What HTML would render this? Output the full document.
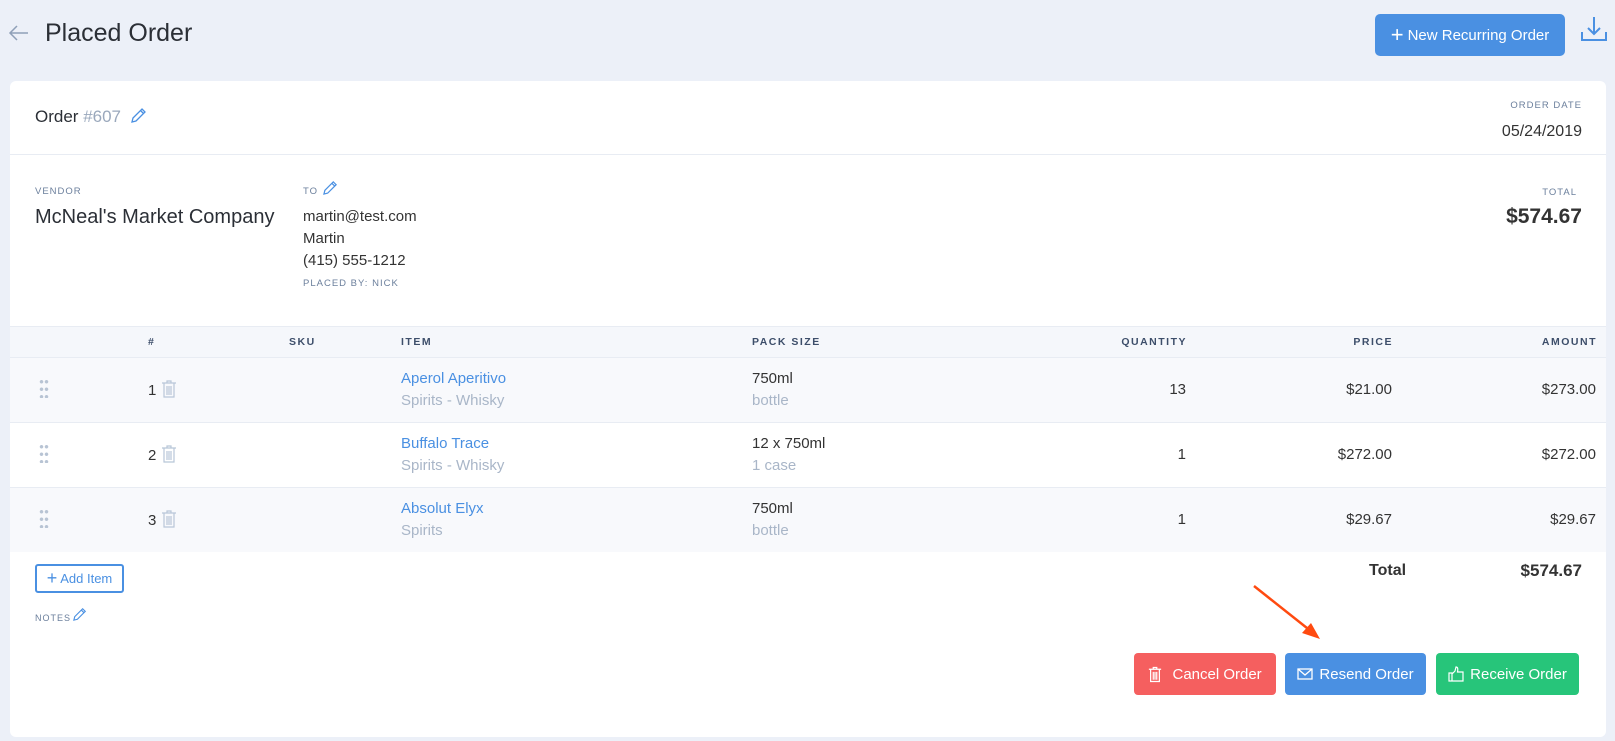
<!DOCTYPE html>
<html><head><meta charset="utf-8"><style>
*{margin:0;padding:0;box-sizing:border-box}
body{width:1615px;height:741px;background:#ecf0f8;font-family:"Liberation Sans",sans-serif;color:#333;position:relative;overflow:hidden}
.a{position:absolute;white-space:nowrap}
.lbl{font-size:10px;letter-spacing:1px;color:#6b7f9c;text-transform:uppercase}
.th{font-size:10.5px;letter-spacing:1.5px;color:#3d4e6a;font-weight:bold}
.card{position:absolute;left:10px;top:81px;width:1596px;height:656px;background:#fff;border-radius:6px}
.row{position:absolute;left:10px;width:1596px;height:65px;border-top:1px solid #e8ecf3}
.blue{color:#4a90e2}.grey{color:#a9b6c8}
.btn{position:absolute;top:653px;height:42px;border-radius:4px;color:#fff;font-size:15px;display:flex;align-items:center;justify-content:center;gap:6px}
</style></head><body>
<svg class="a" style="left:8px;top:24px" width="22" height="18" viewBox="0 0 22 18"><path d="M20 9H2M9 2L2 9l7 7" fill="none" stroke="#8fa0b8" stroke-width="1.5"/></svg>
<div class="a" style="left:45px;top:19px;font-size:25px;color:#2b2f36">Placed Order</div>
<div class="a" style="left:1375px;top:14px;width:190px;height:42px;background:#4a90e2;border-radius:5px;color:#fff;font-size:15px;display:flex;align-items:center;justify-content:center"><span style="font-size:22px;font-weight:300;margin-right:4px">+</span>New Recurring Order</div>
<svg class="a" style="left:1580px;top:15px" width="28" height="28" viewBox="0 0 28 28"><path d="M14 2v17M8 13l6 6 6-6M2 17v8h24v-8" fill="none" stroke="#4a90e2" stroke-width="2"/></svg>
<div class="card"></div>
<div class="a" style="left:35px;top:107px;font-size:17px;color:#2b2f36">Order <span style="color:#9aa8bc">#607</span></div>
<svg class="a" style="left:131px;top:107px" width="16" height="16" viewBox="0 0 16 16"><path d="M11 2l3 3-9 9-4 1 1-4zM9.5 3.5l3 3" fill="none" stroke="#4a90e2" stroke-width="1.3"/></svg>
<div class="a lbl" style="right:33px;top:100px;font-size:9.5px">Order Date</div>
<div class="a" style="right:33px;top:123px;font-size:16px">05/24/2019</div>
<div class="a" style="left:10px;top:154px;width:1596px;border-top:1px solid #e8ecf3"></div>
<div class="a lbl" style="left:35px;top:186px;font-size:9.5px">Vendor</div>
<div class="a" style="left:35px;top:206px;font-size:20px;color:#2b2f36">McNeal's Market Company</div>
<div class="a lbl" style="left:303px;top:186px;font-size:9.5px">To</div>
<svg class="a" style="left:323px;top:180px" width="15" height="15" viewBox="0 0 16 16"><path d="M11 2l3 3-9 9-4 1 1-4zM9.5 3.5l3 3" fill="none" stroke="#4a90e2" stroke-width="1.3"/></svg>
<div class="a" style="left:303px;top:208px;font-size:15px">martin@test.com</div>
<div class="a" style="left:303px;top:230px;font-size:15px">Martin</div>
<div class="a" style="left:303px;top:252px;font-size:15px">(415) 555-1212</div>
<div class="a lbl" style="left:303px;top:278px;font-size:9.5px">Placed by: Nick</div>
<div class="a lbl" style="right:38px;top:187px;font-size:9.5px">Total</div>
<div class="a" style="right:33px;top:205px;font-size:21px;font-weight:bold">$574.67</div>
<div class="a" style="left:10px;top:326px;width:1596px;height:31px;background:#f5f7fb;border-top:1px solid #e8ecf3"></div>
<div class="a th" style="left:148px;top:336px">#</div>
<div class="a th" style="left:289px;top:336px">SKU</div>
<div class="a th" style="left:401px;top:336px">ITEM</div>
<div class="a th" style="left:752px;top:336px">PACK SIZE</div>
<div class="a th" style="right:428px;top:336px">QUANTITY</div>
<div class="a th" style="right:222px;top:336px">PRICE</div>
<div class="a th" style="right:18px;top:336px">AMOUNT</div>

<div class="row" style="top:357px;background:#f8f9fc"></div>
<div class="row" style="top:422px;background:#fff"></div>
<div class="row" style="top:487px;background:#f8f9fc"></div>

<div class="a" style="left:39px;top:378px;width:10px;height:20px;background:radial-gradient(circle,#b8c4d4 1.5px,transparent 2px) 0 0/5px 7.5px"></div>
<div class="a" style="left:39px;top:443px;width:10px;height:20px;background:radial-gradient(circle,#b8c4d4 1.5px,transparent 2px) 0 0/5px 7.5px"></div>
<div class="a" style="left:39px;top:508px;width:10px;height:20px;background:radial-gradient(circle,#b8c4d4 1.5px,transparent 2px) 0 0/5px 7.5px"></div>

<div class="a" style="left:148px;top:382px;font-size:15px">1</div>
<div class="a" style="left:148px;top:447px;font-size:15px">2</div>
<div class="a" style="left:148px;top:512px;font-size:15px">3</div>
<svg class="a" style="left:161px;top:380px" width="16" height="18" viewBox="0 0 16 18"><path d="M1 3h14M6 3V1h4v2M3 3v14h10V3M6 6v9M8 6v9M10 6v9" fill="none" stroke="#b8c6d8" stroke-width="1.2"/></svg>
<svg class="a" style="left:161px;top:445px" width="16" height="18" viewBox="0 0 16 18"><path d="M1 3h14M6 3V1h4v2M3 3v14h10V3M6 6v9M8 6v9M10 6v9" fill="none" stroke="#b8c6d8" stroke-width="1.2"/></svg>
<svg class="a" style="left:161px;top:510px" width="16" height="18" viewBox="0 0 16 18"><path d="M1 3h14M6 3V1h4v2M3 3v14h10V3M6 6v9M8 6v9M10 6v9" fill="none" stroke="#b8c6d8" stroke-width="1.2"/></svg>

<div class="a blue" style="left:401px;top:370px;font-size:15px">Aperol Aperitivo</div>
<div class="a grey" style="left:401px;top:392px;font-size:15px">Spirits - Whisky</div>
<div class="a blue" style="left:401px;top:435px;font-size:15px">Buffalo Trace</div>
<div class="a grey" style="left:401px;top:457px;font-size:15px">Spirits - Whisky</div>
<div class="a blue" style="left:401px;top:500px;font-size:15px">Absolut Elyx</div>
<div class="a grey" style="left:401px;top:522px;font-size:15px">Spirits</div>

<div class="a" style="left:752px;top:370px;font-size:15px">750ml</div>
<div class="a grey" style="left:752px;top:392px;font-size:15px">bottle</div>
<div class="a" style="left:752px;top:435px;font-size:15px">12 x 750ml</div>
<div class="a grey" style="left:752px;top:457px;font-size:15px">1 case</div>
<div class="a" style="left:752px;top:500px;font-size:15px">750ml</div>
<div class="a grey" style="left:752px;top:522px;font-size:15px">bottle</div>

<div class="a" style="right:429px;top:381px;font-size:15px">13</div>
<div class="a" style="right:429px;top:446px;font-size:15px">1</div>
<div class="a" style="right:429px;top:511px;font-size:15px">1</div>
<div class="a" style="right:223px;top:381px;font-size:15px">$21.00</div>
<div class="a" style="right:223px;top:446px;font-size:15px">$272.00</div>
<div class="a" style="right:223px;top:511px;font-size:15px">$29.67</div>
<div class="a" style="right:19px;top:381px;font-size:15px">$273.00</div>
<div class="a" style="right:19px;top:446px;font-size:15px">$272.00</div>
<div class="a" style="right:19px;top:511px;font-size:15px">$29.67</div>

<div class="a" style="left:35px;top:564px;width:89px;height:29px;border:2px solid #4a90e2;border-radius:3px;color:#4a90e2;font-size:13px;display:flex;align-items:center;justify-content:center"><span style="font-size:18px;margin-right:3px">+</span>Add Item</div>
<div class="a lbl" style="left:35px;top:613px;font-size:9px">Notes</div>
<svg class="a" style="left:73px;top:607px" width="14" height="14" viewBox="0 0 16 16"><path d="M11 2l3 3-9 9-4 1 1-4zM9.5 3.5l3 3" fill="none" stroke="#4a90e2" stroke-width="1.3"/></svg>

<div class="a" style="left:1369px;top:562px;font-size:16px;font-weight:bold">Total</div>
<div class="a" style="right:33px;top:561px;font-size:17px;font-weight:bold">$574.67</div>

<svg class="a" style="left:1250px;top:582px" width="75" height="65" viewBox="0 0 75 65"><path d="M4 4L62 50" stroke="#ff4a10" stroke-width="2.5"/><path d="M70 57L52 51 61 41z" fill="#ff4a10"/></svg>

<div class="btn" style="left:1134px;width:142px;background:#f55f5f"><svg width="14" height="17" viewBox="0 0 16 18"><path d="M1 3h14M6 3V1h4v2M3 3v14h10V3M6 6v9M8 6v9M10 6v9" fill="none" stroke="#fff" stroke-width="1.4"/></svg>&nbsp;Cancel Order</div>
<div class="btn" style="left:1285px;width:141px;background:#4a90e2"><svg width="16" height="12" viewBox="0 0 16 12"><rect x="1" y="1" width="14" height="10" fill="none" stroke="#fff" stroke-width="1.3"/><path d="M1 1l7 6 7-6" fill="none" stroke="#fff" stroke-width="1.3"/></svg>Resend Order</div>
<div class="btn" style="left:1436px;width:143px;background:#27c57a"><svg width="16" height="16" viewBox="0 0 16 16"><path d="M1 7h3v8H1zM4 8l3-3 1-4c2 0 2 2 1.5 5H15v9H4" fill="none" stroke="#fff" stroke-width="1.2"/></svg>Receive Order</div>
</body></html>
